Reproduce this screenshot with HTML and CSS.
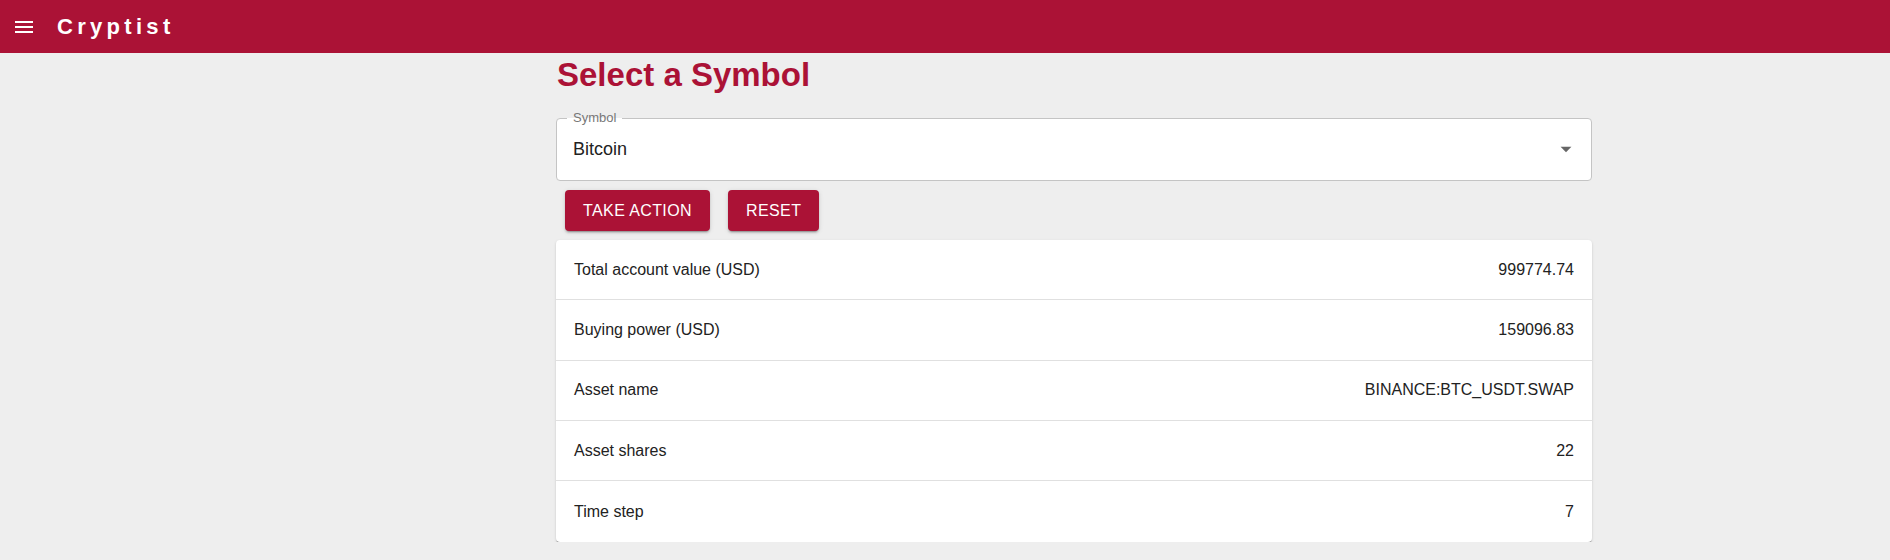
FILE: index.html
```html
<!DOCTYPE html>
<html>
<head>
<meta charset="utf-8">
<title>Cryptist</title>
<link rel="stylesheet" href="styles.css">
</head>
<body>
<header class="appbar">
  <svg class="menu-icon" viewBox="0 0 24 24" width="24" height="24"><path d="M3 18h18v-2H3v2zm0-5h18v-2H3v2zm0-7v2h18V6H3z" fill="#fff"/></svg>
  <div class="brand">Cryptist</div>
</header>
<div class="layout">
  <div class="drawer-space"></div>
  <main class="main">
    <div class="content">
      <h1 class="title">Select a Symbol</h1>
      <div class="select">
        <span class="select-label">Symbol</span>
        <span class="select-value">Bitcoin</span>
        <svg class="select-arrow" viewBox="0 0 24 24" width="24" height="24"><path d="M7 10l5 5 5-5z" fill="#666"/></svg>
      </div>
      <div class="actions">
        <button class="btn">TAKE ACTION</button>
        <button class="btn">RESET</button>
      </div>
      <div class="card">
        <div class="row"><span>Total account value (USD)</span><span>999774.74</span></div>
        <div class="row"><span>Buying power (USD)</span><span>159096.83</span></div>
        <div class="row"><span>Asset name</span><span>BINANCE:BTC_USDT.SWAP</span></div>
        <div class="row"><span>Asset shares</span><span>22</span></div>
        <div class="row"><span>Time step</span><span>7</span></div>
      </div>
    </div>
  </main>
</div>
</body>
</html>
```
FILE: styles.css
```css
html, body {
  margin: 0;
  padding: 0;
}
body {
  background: #eeeeee;
  font-family: "Liberation Sans", Arial, sans-serif;
  color: #222;
}
.appbar {
  height: 53px;
  background: #ab1236;
  display: flex;
  align-items: center;
  padding-left: 12px;
  box-sizing: border-box;
}
.menu-icon {
  display: block;
  width: 24px;
  height: 24px;
}
.brand {
  margin-left: 21px;
  color: #fff;
  font-weight: bold;
  font-size: 22px;
  letter-spacing: 4.3px;
}
.layout {
  display: flex;
}
.drawer-space {
  flex: 0 0 258px;
}
.main {
  flex: 1;
  display: flex;
  justify-content: center;
}
.content {
  width: 1036px;
}
.title {
  margin: 0;
  padding-top: 2px;
  height: 63px;
  color: #ab1236;
  font-size: 33px;
  font-weight: bold;
  line-height: 40px;
  padding-left: 1px;
}
.select {
  position: relative;
  height: 63px;
  background: #fff;
  border: 1px solid #c4c4c4;
  border-radius: 4px;
  box-sizing: border-box;
  display: flex;
  align-items: center;
  padding: 0 16px;
}
.select-label {
  position: absolute;
  top: -8px;
  left: 10px;
  padding: 0 6px;
  font-size: 13px;
  line-height: 14px;
  color: #777;
  background: linear-gradient(#eeeeee 50%, #fff 50%);
}
.select-value {
  flex: 1;
  font-size: 18px;
  color: #222;
  padding-bottom: 1px;
}
.select-arrow {
  width: 26px;
  height: 26px;
  margin-right: -4px;
  margin-bottom: 1px;
}
.actions {
  display: flex;
  gap: 18px;
  padding: 9px 0 9px 9px;
}
.btn {
  height: 41px;
  padding: 0 18px;
  border: none;
  border-radius: 4px;
  background: #ab1236;
  color: #fff;
  font-family: "Liberation Sans", Arial, sans-serif;
  font-size: 16px;
  letter-spacing: 0.4px;
  box-shadow: 0 3px 1px -2px rgba(0,0,0,0.2), 0 2px 2px 0 rgba(0,0,0,0.14), 0 1px 5px 0 rgba(0,0,0,0.12);
}
.card {
  background: #fff;
  border-radius: 4px;
  box-shadow: 0 3px 1px -1px rgba(0,0,0,0.3), 0 1px 1px 0 rgba(0,0,0,0.14), 0 1px 3px 0 rgba(0,0,0,0.12);
}
.row {
  height: 60.3px;
  display: flex;
  align-items: center;
  justify-content: space-between;
  padding: 0 18px;
  font-size: 16px;
  color: #222;
  border-bottom: 1px solid #e0e0e0;
  box-sizing: border-box;
}
.row:last-child {
  border-bottom: none;
  height: 61px;
}
```
